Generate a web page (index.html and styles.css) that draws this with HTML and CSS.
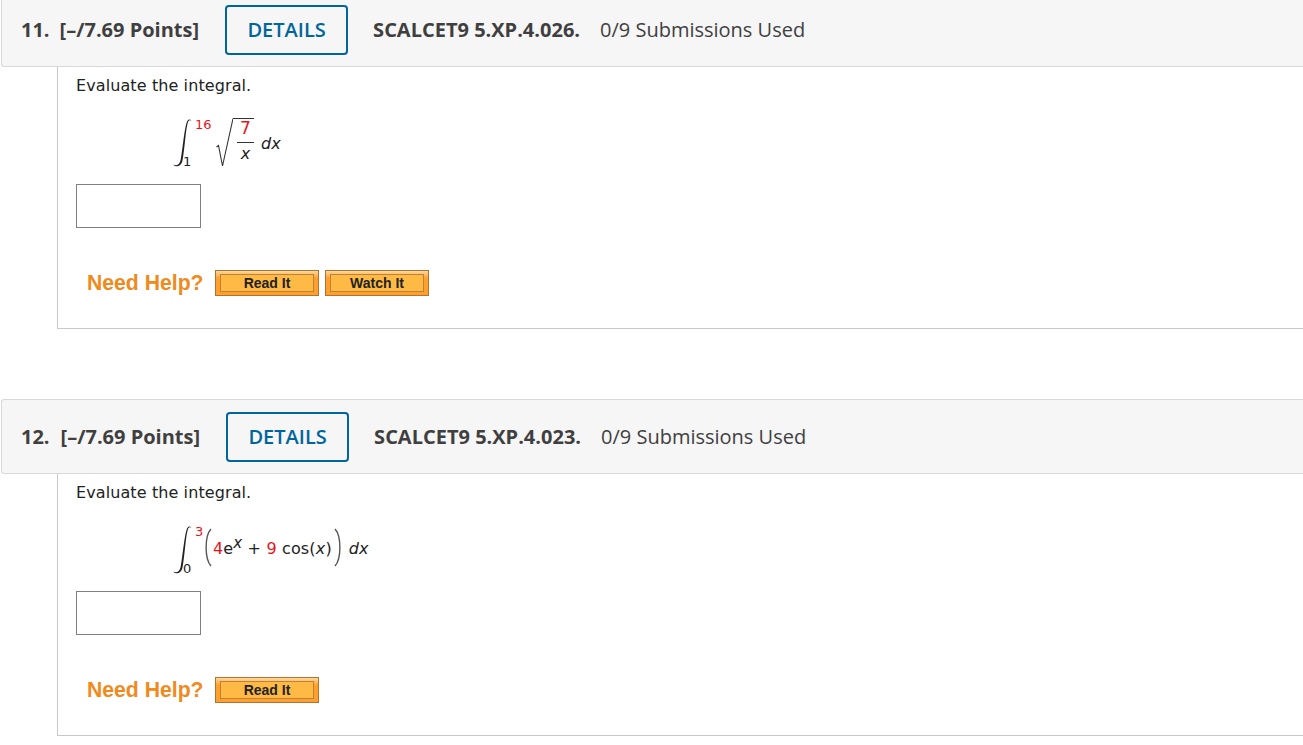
FILE: index.html
```html
<!DOCTYPE html>
<html lang="en">
  <head>
    <meta charset="UTF-8" />
    <meta name="viewport" content="width=device-width, initial-scale=1.0" />
    <title>Assignment Questions</title>
    <link rel="stylesheet" href="styles.css">
  </head>
  <body>
    <!-- Question 11 -->
    <div class="question q-eleven">
      <div class="question-head">
        <span class="q-number">11.</span>
        <span class="q-points">[&ndash;/7.69 Points]</span>
        <a href="#" class="details-btn">DETAILS</a>
        <span class="q-code">SCALCET9 5.XP.4.026.</span>
        <span class="q-subs">0/9 Submissions Used</span>
      </div>
      <div class="question-body">
        <p class="prompt">Evaluate the integral.</p>
        <div class="math">
          <svg class="integral" width="19" height="48" viewBox="0 0 19 48">
            <path d="M18.800 2.600C18 1 16 .8 15 3 12.600 10 11.800 30 9.400 42 8.600 46 5.500 47.600 3 47.200 1.600 47 .8 46.200 .4 45.400 1.200 45.900 2 46.300 3.200 46.200 5.400 46 7 44 7.600 41 9.800 30 11.200 10 14 2.600 15.500-.5 18 .2 18.800 2.600Z" fill="#222" />
          </svg>
          <div class="limits limits-wide">
            <span class="red">16</span>
            <span>1</span>
          </div>
          <svg class="radical" width="17" height="50" viewBox="0 0 17 50">
            <path d="M.5 29l2-1.500L6.500 48 17 .5" fill="none" stroke="#333" stroke-width="1.100" />
          </svg>
          <div class="radicand">
            <span class="numerator red">7</span>
            <span class="denominator"><i>x</i></span>
          </div>
          <span class="dx"><i>dx</i></span>
        </div>
        <div class="answer-box"></div>
        <div class="help-row">
          <span class="need-help">Need Help?</span>
          <a href="#" class="help-btn"><span>Read It</span></a>
          <a href="#" class="help-btn"><span>Watch It</span></a>
        </div>
      </div>
    </div>

    <!-- Question 12 -->
    <div class="question q-twelve">
      <div class="question-head">
        <span class="q-number">12.</span>
        <span class="q-points">[&ndash;/7.69 Points]</span>
        <a href="#" class="details-btn">DETAILS</a>
        <span class="q-code">SCALCET9 5.XP.4.023.</span>
        <span class="q-subs">0/9 Submissions Used</span>
      </div>
      <div class="question-body">
        <p class="prompt">Evaluate the integral.</p>
        <div class="math">
          <svg class="integral" width="19" height="48" viewBox="0 0 19 48">
            <path d="M18.800 2.600C18 1 16 .8 15 3 12.600 10 11.800 30 9.400 42 8.600 46 5.500 47.600 3 47.200 1.600 47 .8 46.200 .4 45.400 1.200 45.900 2 46.300 3.200 46.200 5.400 46 7 44 7.600 41 9.800 30 11.200 10 14 2.600 15.500-.5 18 .2 18.800 2.600Z" fill="#222" />
          </svg>
          <div class="limits">
            <span class="red">3</span>
            <span>0</span>
          </div>
          <svg class="paren" width="9" height="39" viewBox="0 0 9 39">
            <path d="M8 1C1.500 8 1.500 31 8 38" fill="none" stroke="#555" stroke-width="1.400" />
          </svg>
          <span class="expr"><span class="red">4</span>e<sup><i>x</i></sup> + <span class="red">9</span> cos(<i>x</i>)</span>
          <svg class="paren" width="9" height="39" viewBox="0 0 9 39">
            <path d="M1 1C7.500 8 7.500 31 1 38" fill="none" stroke="#555" stroke-width="1.400" />
          </svg>
          <span class="dx dx-after-paren"><i>dx</i></span>
        </div>
        <div class="answer-box"></div>
        <div class="help-row">
          <span class="need-help">Need Help?</span>
          <a href="#" class="help-btn"><span>Read It</span></a>
        </div>
      </div>
    </div>
  </body>
</html>
```

FILE: styles.css
```css
/* General Page Styles */
body {
  margin: 0;
  padding: 0;
  background-color: #fff;
  font-family: "DejaVu Sans", Verdana, sans-serif;
  color: #222;
  overflow: hidden;
}

.red {
  color: #e8141c;
}

/* Question header bar */
.question {
  margin-left: 1px;
}

.q-twelve {
  margin-top: 70px;
}

.question-head {
  display: flex;
  align-items: center;
  height: 59px;
  padding: 0 0 7px 19px;
  background-color: #f6f6f6;
  border-left: 1px solid #d9d9d9;
  border-bottom: 1px solid #d9d9d9;
  border-radius: 0 0 0 3px;
  font-family: "Open Sans", sans-serif;
  font-size: 20px;
  color: #3f3f3f;
}

.q-twelve .question-head {
  height: 73px;
  padding-bottom: 0;
  border-top: 1px solid #d9d9d9;
  border-radius: 3px 0 0 3px;
}

.q-number,
.q-points,
.q-code {
  font-weight: 700;
}

.q-number {
  margin-right: 10px;
}

.q-twelve .q-number {
  margin-right: 11px;
}

.details-btn {
  margin-left: 26px;
  width: 119px;
  height: 46px;
  border: 2px solid #00659c;
  border-radius: 4px;
  display: flex;
  align-items: center;
  justify-content: center;
  color: #00659c;
  font-weight: 600;
  text-decoration: none;
}

.q-code {
  margin-left: 25px;
}

.q-subs {
  margin-left: 20px;
}

/* Question body */
.question-body {
  margin-left: 56px;
  padding-left: 18px;
  border-left: 1px solid #c8c8c8;
  border-bottom: 1px solid #c8c8c8;
  height: 261px;
}

.prompt {
  margin: 0;
  padding-top: 9px;
  font-size: 16px;
  line-height: 19px;
  letter-spacing: 0.1px;
}

/* Typeset integrals */
.math {
  display: flex;
  align-items: center;
  height: 50px;
  margin: 23px 0 0 97px;
  font-size: 16px;
}

.limits {
  display: flex;
  flex-direction: column;
  justify-content: space-between;
  flex-shrink: 0;
  height: 52px;
  width: 20px;
  margin-left: -9px;
  font-size: 13px;
  line-height: 15px;
}

.limits-wide {
  width: 33px;
}

.limits span:first-child {
  padding-left: 12px;
}

.radicand {
  display: flex;
  flex-direction: column;
  align-items: flex-end;
  box-sizing: border-box;
  width: 21px;
  height: 50px;
  border-top: 1px solid #333;
}

.numerator {
  width: 17px;
  height: 23px;
  border-bottom: 1px solid #333;
  text-align: center;
  font-size: 17px;
  line-height: 18px;
}

.denominator {
  width: 17px;
  text-align: center;
  line-height: 22px;
}

.dx {
  margin-left: 7px;
}

.dx-after-paren {
  margin: 0 0 4px 6px;
}

.paren {
  margin-bottom: 5px;
}

.expr {
  margin: 0 2px 4px 1px;
  white-space: nowrap;
  letter-spacing: 0.15px;
}

.expr sup {
  font-size: 15px;
  line-height: 0;
}

/* Answer input */
.answer-box {
  width: 123px;
  height: 42px;
  margin-top: 16px;
  border: 1px solid #808080;
  background-color: #fff;
}

/* Need Help row */
.help-row {
  display: flex;
  align-items: center;
  margin: 42px 0 0 11px;
}

.need-help {
  width: 128px;
  font-family: "Liberation Sans", Arial, sans-serif;
  font-size: 21.2px;
  font-weight: 700;
  color: #f18a1c;
}

.help-btn {
  box-sizing: border-box;
  width: 104px;
  height: 26px;
  margin-right: 6px;
  padding: 3px 4px;
  background: linear-gradient(#ffd9a0, #ff9f2e 30%, #ff9f2e);
  border: 1px solid #b07430;
  display: flex;
  text-decoration: none;
}

.help-btn span {
  flex: 1;
  display: flex;
  align-items: center;
  justify-content: center;
  background-color: #ffba45;
  border: 1px solid #bd8233;
  font-family: "Liberation Sans", Arial, sans-serif;
  font-size: 14px;
  font-weight: 700;
  color: #222;
}
```
